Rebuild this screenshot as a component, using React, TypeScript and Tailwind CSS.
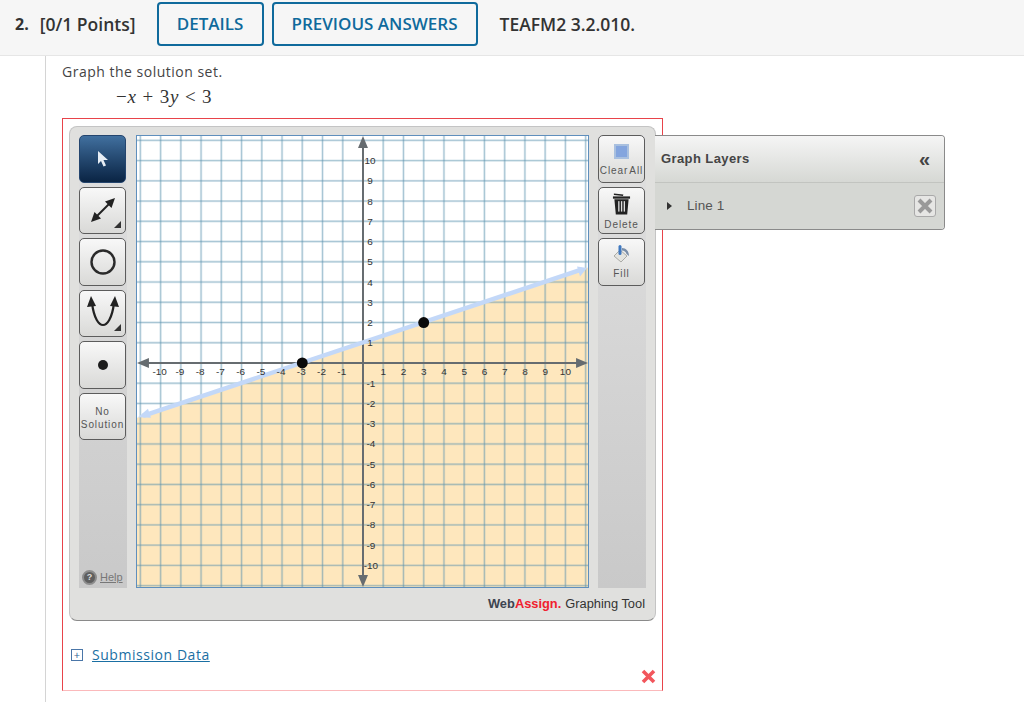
const unit = 20.33;
const cx = 227;
const cy = 228;
const ticks = [-11, -10, -9, -8, -7, -6, -5, -4, -3, -2, -1, 1, 2, 3, 4, 5, 6, 7, 8, 9, 10, 11];
const labels = ticks.filter((n) => Math.abs(n) <= 10);

const px = (n: number) => cx + n * unit;
const py = (n: number) => cy - n * unit;

function Graph() {
  return (
    <svg width="453" height="453" viewBox="0 0 453 453" className="block shrink-0 border border-[#5f8fbd] bg-white">
      {/* shaded half plane */}
      <polygon points={`0,283 453,132 453,453 0,453`} fill="#fee7bd" />

      {/* grid */}
      {ticks.map((n) => (
        <g key={n}>
          <line x1={px(n)} x2={px(n)} y1="0" y2="453" stroke="#6fa3bd" strokeOpacity="0.26" strokeWidth="2.4" />
          <line x1={px(n)} x2={px(n)} y1="0" y2="453" stroke="#4f8aa6" strokeOpacity="0.36" strokeWidth="1" />
          <line y1={py(n)} y2={py(n)} x1="0" x2="453" stroke="#6fa3bd" strokeOpacity="0.26" strokeWidth="2.4" />
          <line y1={py(n)} y2={py(n)} x1="0" x2="453" stroke="#4f8aa6" strokeOpacity="0.36" strokeWidth="1" />
        </g>
      ))}

      {/* axes */}
      <line x1="4" x2="449" y1={cy} y2={cy} stroke="#666c70" strokeWidth="2" />
      <line y1="4" y2="449" x1={cx} x2={cx} stroke="#666c70" strokeWidth="2" />
      <polygon points={`0,${cy} 12,${cy - 5} 12,${cy + 5}`} fill="#666c70" />
      <polygon points={`453,${cy} 441,${cy - 5} 441,${cy + 5}`} fill="#666c70" />
      <polygon points={`${cx},0 ${cx - 5},12 ${cx + 5},12`} fill="#666c70" />
      <polygon points={`${cx},453 ${cx - 5},441 ${cx + 5},441`} fill="#666c70" />

      {/* boundary line */}
      <line x1="6" y1="281" x2="447" y2="134" stroke="#c3d8f8" strokeWidth="4.5" />
      <polygon points="1,282.5 11,274 14,283" fill="#c3d8f8" />
      <polygon points="452,132.5 442,131 445,141" fill="#c3d8f8" />

      {/* tick labels */}
      <g fontFamily="'Liberation Sans', sans-serif" fontSize="10" fill="#333" textAnchor="middle">
        {labels.map((n) => (
          <text key={n} x={px(n) - (n < 0 ? 1 : 0)} y={cy + 12}>
            {n}
          </text>
        ))}
        {labels.map((n) => (
          <text key={n} x={cx + (n < 0 ? 8 : 7)} y={py(n) + 3.5}>
            {n}
          </text>
        ))}
      </g>

      <circle cx={px(-3)} cy={cy} r="5.5" fill="#0a0a0a" />
      <circle cx={px(3)} cy={py(2)} r="5.5" fill="#0a0a0a" />
    </svg>
  );
}

function ToolButton({ active, corner, children }: { active?: boolean; corner?: boolean; children: React.ReactNode }) {
  return (
    <button
      className={`relative flex h-[47.5px] w-[47px] flex-col items-center justify-center rounded-[5px] border ${
        active
          ? 'border-[#24456e] bg-gradient-to-b from-[#41709f] to-[#0a2444]'
          : 'border-[#5c5c5c] bg-gradient-to-b from-[#f8f8f8] to-[#d9d9d7]'
      }`}
    >
      {children}
      {corner && (
        <svg width="7" height="7" viewBox="0 0 7 7" className="absolute bottom-[5px] right-[4px]">
          <polygon points="7,0 7,7 0,7" fill="#333" />
        </svg>
      )}
    </button>
  );
}

const labelText =
  "whitespace-nowrap font-['Liberation_Sans',sans-serif] text-[10px] leading-[13px] tracking-[0.9px] text-[#555] [word-spacing:-2px]";

function LeftTools() {
  return (
    <div className="flex h-[453px] w-[48px] shrink-0 flex-col gap-[4px] bg-gradient-to-b from-[#e0e0e0] to-[#c9c9c9]">
      <ToolButton active>
        <svg width="14" height="18" viewBox="0 0 14 18">
          <polygon points="2,1 2,14 5,11 7.5,16.5 10,15.5 7.5,10 12,10" fill="#e8eef5" />
        </svg>
      </ToolButton>
      <ToolButton corner>
        <svg width="30" height="30" viewBox="0 0 30 30">
          <line x1="6" y1="24" x2="24" y2="6" stroke="#222" strokeWidth="2" />
          <polygon points="27,3 23.5,13 17,6.5" fill="#222" />
          <polygon points="3,27 6.5,17 13,23.5" fill="#222" />
        </svg>
      </ToolButton>
      <ToolButton>
        <svg width="28" height="28" viewBox="0 0 28 28">
          <circle cx="14" cy="14" r="11.5" fill="none" stroke="#2a2a2a" strokeWidth="2.4" />
        </svg>
      </ToolButton>
      <ToolButton corner>
        <svg width="34" height="36" viewBox="0 0 34 36">
          <path d="M6 8 C8 24 13 30 17 30 C21 30 26 24 28 8" fill="none" stroke="#222" strokeWidth="2.2" />
          <polygon points="5,1 1,12 10,11" fill="#222" />
          <polygon points="29,1 24,11 33,12" fill="#222" />
        </svg>
      </ToolButton>
      <ToolButton>
        <span className="h-[10px] w-[10px] rounded-full bg-[#1c1c1c]" />
      </ToolButton>
      <ToolButton>
        <span className={`mt-[4px] ${labelText}`}>No</span>
        <span className={labelText}>Solution</span>
      </ToolButton>
      <div className="mt-auto flex h-[22px] items-center gap-[3px] pl-[3px]">
        <span className="flex h-[15px] w-[15px] items-center justify-center rounded-full border-2 border-[#8d8d8d] bg-[#5f5f5f] font-['Liberation_Sans',sans-serif] text-[9px] font-bold leading-none text-[#ddd]">
          ?
        </span>
        <a className="font-['Liberation_Sans',sans-serif] text-[11px] text-[#777] underline">Help</a>
      </div>
    </div>
  );
}

function RightTools() {
  return (
    <div className="flex h-[453px] w-[48px] shrink-0 flex-col gap-[4px] bg-gradient-to-b from-[#e0e0e0] to-[#c9c9c9]">
      <ToolButton>
        <span className="mb-[5px] mt-[4px] h-[15px] w-[15px] border-2 border-[#a9c0df] bg-[#84a5de]" />
        <span className={labelText}>Clear All</span>
      </ToolButton>
      <ToolButton>
        <svg width="19" height="24" viewBox="0 0 20 24" className="mb-[2px] mt-[2px]">
          <polygon points="2,1 12,2 11.5,3.5 2,2.5" fill="#222" />
          <rect x="1" y="4" width="18" height="2.4" fill="#222" />
          <polygon points="2.5,7 17.5,7 16,23 4,23" fill="#222" />
          <rect x="6.5" y="9" width="1.4" height="11" fill="#ddd" />
          <rect x="9.4" y="9" width="1.4" height="11" fill="#ddd" />
          <rect x="12.3" y="9" width="1.4" height="11" fill="#ddd" />
        </svg>
        <span className={labelText}>Delete</span>
      </ToolButton>
      <ToolButton>
        <svg width="18" height="20" viewBox="0 0 18 20" className="mb-[3px]">
          <polygon points="1,12 7,6 14,12 8,18" fill="#e4e4e0" stroke="#9a9a96" strokeWidth="0.8" />
          <rect x="5.5" y="1" width="3" height="10" rx="1.5" fill="#3f78c0" />
          <path d="M9 4 C13 4 16 7 16 12 L13.5 10 C13 8 11 6.5 9 6.5 Z" fill="#7a8ea8" />
        </svg>
        <span className={labelText}>Fill</span>
      </ToolButton>
    </div>
  );
}

function GraphLayers() {
  return (
    <div className="absolute left-[655px] top-[135px] w-[290px] overflow-hidden rounded-r-[4px] border border-l-0 border-[#8a8a8a] font-['Liberation_Sans',sans-serif]">
      <div className="flex h-[47px] items-center justify-between border-b border-[#c2c4c0] bg-gradient-to-b from-[#f5f5f5] to-[#d6d8d4] pl-[6px] pr-[14px]">
        <span className="text-[13px] font-bold tracking-[0.4px] text-[#454545]">Graph Layers</span>
        <span className="text-[20px] font-bold leading-none text-[#444]">«</span>
      </div>
      <div className="flex h-[46px] items-center bg-[#d5d7d3] pl-[12px] pr-[8px]">
        <svg width="5" height="8" viewBox="0 0 5 8">
          <polygon points="0,0 5,4 0,8" fill="#333" />
        </svg>
        <span className="ml-[15px] text-[13.5px] tracking-[0.1px] text-[#555]">Line 1</span>
        <span className="ml-auto flex h-[22px] w-[22px] items-center justify-center rounded-[3px] border border-[#a9a9a9] bg-[#e6e6e4]">
          <svg width="16" height="16" viewBox="0 0 16 16">
            <path d="M2 2 L14 14 M14 2 L2 14" stroke="#999" strokeWidth="4" />
          </svg>
        </span>
      </div>
    </div>
  );
}

export default function App() {
  return (
    <div className="relative h-[702px] w-[1024px] overflow-hidden bg-white font-['Open_Sans',sans-serif] text-[#333]">
      <header className="flex h-[56px] items-center border-b border-[#e6e6e6] bg-[#f6f6f6] pb-[7px] pl-[15px]">
        <span className="text-[16px] font-bold text-[#333]">2.</span>
        <span className="ml-[11px] text-[17.5px] font-semibold text-[#333]">[0/1 Points]</span>
        <button className="ml-[21px] flex h-[44px] w-[107px] items-center justify-center rounded-[4px] border-2 border-[#0f6a9c] text-[17px] font-semibold text-[#0f6a9c]">
          DETAILS
        </button>
        <button className="ml-[8px] flex h-[44px] w-[206px] items-center justify-center rounded-[4px] border-2 border-[#0f6a9c] text-[17px] font-semibold text-[#0f6a9c]">
          PREVIOUS ANSWERS
        </button>
        <span className="ml-[22px] text-[17.5px] font-semibold text-[#333]">TEAFM2 3.2.010.</span>
      </header>

      <div className="ml-[45px] h-[646px] border-l border-[#d4d4d4] pl-[16px]">
        <p className="pt-[6px] text-[14px] leading-[20px] tracking-[0.5px] text-[#444]">Graph the solution set.</p>
        <p className="mt-[2px] pl-[54px] font-['Liberation_Serif',serif] text-[19px] leading-[26px] tracking-[0.85px] text-[#333]">
          −<i>x</i> + 3<i>y</i> &lt; 3
        </p>

        <div className="mt-[8px] flex h-[573px] w-[601px] flex-col border border-[#e8434a] border-b-[#fbb9bb] pl-[6px] pt-[7px]">
          <div className="flex h-[495px] w-[587px] gap-[9px] rounded-[8px] border border-[#c4c4c4] border-b-[#8a8a8a] bg-[#e0e0de] pl-[9px] pt-[8px]">
            <LeftTools />
            <div className="flex flex-col">
              <Graph />
            </div>
            <RightTools />
          </div>
          <div className="relative -mt-[33px] flex h-[33px] w-[587px] items-center justify-end pb-[2px] pr-[11px] font-['Liberation_Sans',sans-serif] text-[12.85px]">
            <span className="font-bold text-[#3d4450]">Web</span>
            <span className="font-bold text-[#f0202e]">Assign.</span>
            <span className="ml-[4px] font-medium text-[#333]">Graphing Tool</span>
          </div>

          <div className="mt-[23px] flex items-center pl-[2px]">
            <span className="flex h-[12px] w-[12px] items-center justify-center border border-[#4a76a8] text-[11px] leading-none text-[#2f5f94]">
              +
            </span>
            <a className="ml-[9px] text-[14px] tracking-[0.55px] text-[#1a6fa3] underline">Submission Data</a>
          </div>

          <div className="mt-auto flex justify-end pb-[6px] pr-[6px]">
            <svg width="15" height="15" viewBox="0 0 15 15">
              <path d="M2 2 L13 13 M13 2 L2 13" stroke="#f2565c" strokeWidth="3.6" />
            </svg>
          </div>
        </div>
      </div>

      <GraphLayers />
    </div>
  );
}
